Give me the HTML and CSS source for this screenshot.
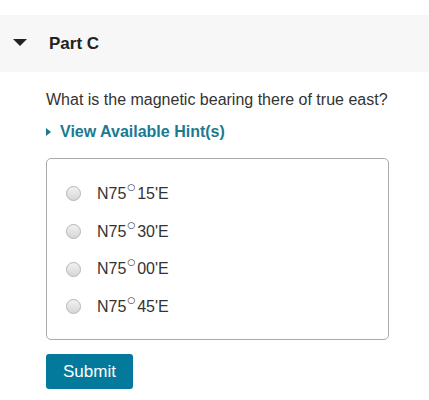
FILE: index.html
```html
<!DOCTYPE html>
<html>
<head>
<meta charset="utf-8">
<link rel="stylesheet" href="styles.css">
</head>
<body>
<div class="part-header">
  <svg class="caret" width="14" height="7" viewBox="0 0 14 7"><polygon points="0,0 14,0 7,7" fill="#222"/></svg>
  <span class="part-title">Part C</span>
</div>
<div class="content">
  <p class="question">What is the magnetic bearing there of true east?</p>
  <div class="hint">
    <svg class="hint-caret" width="5" height="8" viewBox="0 0 5 8"><polygon points="0,0 5,4 0,8" fill="#1a7a93"/></svg>
    <span>View Available Hint(s)</span>
  </div>
  <div class="choices">
    <label class="choice"><span class="radio"></span><span class="label">N75<sup class="deg">○</sup>15'E</span></label>
    <label class="choice"><span class="radio"></span><span class="label">N75<sup class="deg">○</sup>30'E</span></label>
    <label class="choice"><span class="radio"></span><span class="label">N75<sup class="deg">○</sup>00'E</span></label>
    <label class="choice"><span class="radio"></span><span class="label">N75<sup class="deg">○</sup>45'E</span></label>
  </div>
  <button class="submit">Submit</button>
</div>
</body>
</html>
```
FILE: styles.css
```css
html, body {
  margin: 0;
  padding: 0;
  background: #fff;
  font-family: "Liberation Sans", Arial, sans-serif;
  color: #333;
}
.part-header {
  margin-top: 15px;
  height: 57px;
  background: #f7f7f7;
  display: flex;
  align-items: center;
  padding-left: 13px;
}
.caret {
  display: block;
  margin-top: -2px;
}
.part-title {
  margin-left: 22px;
  font-size: 17px;
  font-weight: bold;
  color: #222;
}
.content {
  padding-left: 46px;
  width: 343px;
}
.question {
  margin: 18px 0 0;
  font-size: 16px;
  line-height: 20px;
  color: #333;
}
.hint {
  margin-top: 12px;
  display: flex;
  align-items: center;
  font-size: 16px;
  font-weight: bold;
  color: #1a7a93;
  line-height: 20px;
}
.hint-caret {
  display: block;
  margin-right: 9px;
}
.choices {
  margin-top: 16px;
  border: 1px solid #aaa;
  border-radius: 5px;
  height: 182px;
  box-sizing: border-box;
  padding-top: 16px;
}
.choice {
  display: flex;
  align-items: center;
  height: 37.7px;
  padding-left: 19px;
  font-size: 16px;
  color: #333;
}
.radio {
  width: 15px;
  height: 15px;
  box-sizing: border-box;
  border-radius: 50%;
  border: 1px solid #b5b5b5;
  background: linear-gradient(#f2f2f2, #d6d6d6);
}
.label {
  margin-left: 16px;
}
.label .deg {
  font-family: "DejaVu Sans", sans-serif;
  font-size: 9px;
  line-height: 1;
  vertical-align: baseline;
  position: relative;
  top: -9px;
  color: #222;
  margin: 0 2px 0 1px;
}
.submit {
  margin-top: 14px;
  width: 87px;
  height: 35px;
  border: none;
  border-radius: 3px;
  background: #037a9b;
  color: #fff;
  font-family: "Liberation Sans", Arial, sans-serif;
  font-size: 17px;
  padding: 0;
}
```
